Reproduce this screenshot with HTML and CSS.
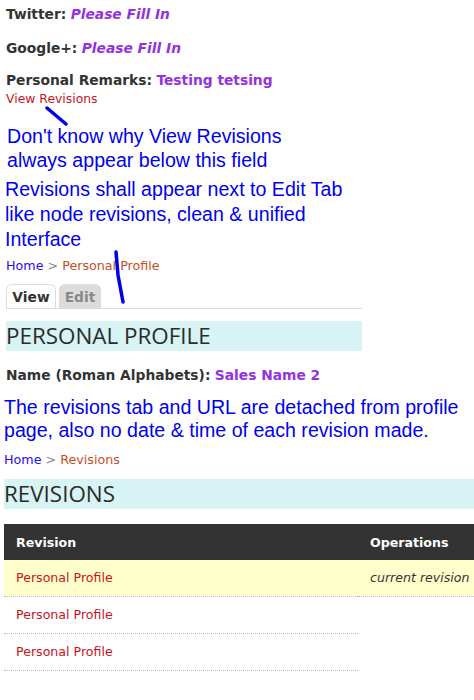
FILE: index.html
```html
<!DOCTYPE html>
<html>
<head>
<meta charset="utf-8">
<title>Personal Profile</title>
<link rel="stylesheet" href="styles.css">
</head>
<body>
<div class="page">
  <section class="profile-top">
    <div class="field field-twitter"><span class="label">Twitter:</span> <em class="value">Please Fill In</em></div>
    <div class="field field-google"><span class="label">Google+:</span> <em class="value">Please Fill In</em></div>
    <div class="field field-remarks"><span class="label">Personal Remarks:</span> <span class="value">Testing tetsing</span></div>
    <a class="rev-link" href="#">View Revisions</a>
  </section>

  <p class="note note-1">Don't know why View Revisions<br>always appear below this field</p>
  <p class="note note-2">Revisions shall appear next to Edit Tab<br>like node revisions, clean &amp; unified<br>Interface</p>

  <section class="profile">
    <nav class="crumbs"><a class="home" href="#">Home</a> <span class="sep">&gt;</span> <span class="current">Personal Profile</span></nav>
    <ul class="tabs">
      <li class="tab tab-active">View</li>
      <li class="tab tab-inactive">Edit</li>
    </ul>
    <h1 class="title title-profile">PERSONAL PROFILE</h1>
    <div class="field field-name"><span class="label">Name (Roman Alphabets):</span> <span class="value">Sales Name 2</span></div>
  </section>

  <p class="note note-3">The revisions tab and URL are detached from profile<br>page, also no date &amp; time of each revision made.</p>

  <section class="revisions">
    <nav class="crumbs"><a class="home" href="#">Home</a> <span class="sep">&gt;</span> <span class="current">Revisions</span></nav>
    <h1 class="title title-revisions">REVISIONS</h1>
    <table class="rev-table">
      <thead>
        <tr><th class="col-rev">Revision</th><th class="col-ops">Operations</th></tr>
      </thead>
      <tbody>
        <tr class="row-current"><td><a href="#">Personal Profile</a></td><td class="ops"><em>current revision</em></td></tr>
        <tr><td><a href="#">Personal Profile</a></td></tr>
        <tr><td><a href="#">Personal Profile</a></td></tr>
      </tbody>
    </table>
  </section>

  <svg class="marks" width="474" height="700" viewBox="0 0 474 700">
    <line x1="47" y1="108" x2="66" y2="124" />
    <path d="M116 252 L118 275 L123 302" fill="none" />
  </svg>
</div>
</body>
</html>
```

FILE: styles.css
```css
html, body {
  margin: 0;
  padding: 0;
  background: #fff;
}

body {
  font-family: "DejaVu Sans", Verdana, sans-serif;
  color: #333;
}

.page {
  position: relative;
  width: 474px;
  height: 700px;
  overflow: hidden;
}

.profile-top {
  padding: 6px 0 0 6px;
}

.field {
  font-size: 13.8px;
  line-height: 16px;
  white-space: nowrap;
}

.label {
  font-weight: bold;
  color: #333;
}

.value {
  font-weight: bold;
  color: #9432e0;
}

.field-google {
  margin-top: 18px;
}

.field-remarks {
  margin-top: 16px;
}

.rev-link {
  display: block;
  margin-top: 3px;
  font-size: 12.4px;
  line-height: 15px;
  color: #c8141e;
  text-decoration: none;
}

.note {
  margin: 0;
  font-family: "Liberation Sans", Arial, sans-serif;
  font-size: 19.6px;
  color: #0000f0;
  white-space: nowrap;
}

.note-1 {
  margin-top: 18px;
  padding-left: 7px;
  line-height: 24px;
}

.note-2 {
  margin-top: 5px;
  padding-left: 5px;
  line-height: 25px;
}

.profile {
  width: 356px;
  padding-left: 6px;
}

.crumbs {
  font-size: 12.7px;
  line-height: 15px;
  margin-top: 6px;
}

.crumbs .home {
  color: #2a0af0;
  text-decoration: none;
}

.crumbs .sep {
  color: #888;
}

.crumbs .current {
  color: #c4501e;
}

.tabs {
  list-style: none;
  margin: 11px 0 0 0;
  padding: 0;
  display: flex;
  gap: 3px;
  border-bottom: 1px solid #dcdcdc;
}

.tab {
  font-size: 13.8px;
  font-weight: bold;
  line-height: 22px;
  height: 24px;
  border-radius: 6px 6px 0 0;
  text-align: center;
  box-sizing: border-box;
}

.tab-active {
  width: 50px;
  border: 1px solid #dcdcdc;
  border-bottom: none;
  padding-top: 1px;
  color: #333;
  background: #fff;
}

.tab-inactive {
  width: 42px;
  padding-top: 2px;
  color: #888;
  background: #dcdcdc;
}

.title {
  margin: 0;
  font-family: "Open Sans", "Lato", sans-serif;
  font-weight: normal;
  font-size: 22.4px;
  line-height: 30px;
  height: 30px;
  color: #2b2b2b;
  background: #d8f3f3;
  padding-left: 0;
}

.title-profile {
  margin-top: 12px;
}

.field-name {
  margin-top: 16px;
}

.note-3 {
  margin-top: 13px;
  padding-left: 4px;
  line-height: 23px;
}

.revisions {
  padding-left: 4px;
}

.revisions .crumbs {
  margin-top: 10px;
}

.title-revisions {
  margin-top: 12px;
}

.rev-table {
  margin-top: 15px;
  width: 480px;
  border-collapse: collapse;
  font-size: 12.6px;
}

.rev-table th {
  background: #333;
  color: #fff;
  font-weight: bold;
  text-align: left;
  height: 36px;
  padding: 0 12px;
  box-sizing: border-box;
  white-space: nowrap;
}

.rev-table .col-rev {
  width: 354px;
}

.rev-table td {
  height: 37px;
  padding: 0 12px;
  border-bottom: 1px dotted #bbb;
  box-sizing: border-box;
  white-space: nowrap;
}

.rev-table .row-current td {
  height: 36px;
  background: #ffffcc;
}

.rev-table td a {
  color: #c8141e;
  text-decoration: none;
}

.ops em {
  color: #333;
}

.marks {
  position: absolute;
  left: 0;
  top: 0;
  pointer-events: none;
}

.marks line,
.marks path {
  stroke: #0000e8;
  stroke-width: 3.5;
  stroke-linecap: round;
}
```
